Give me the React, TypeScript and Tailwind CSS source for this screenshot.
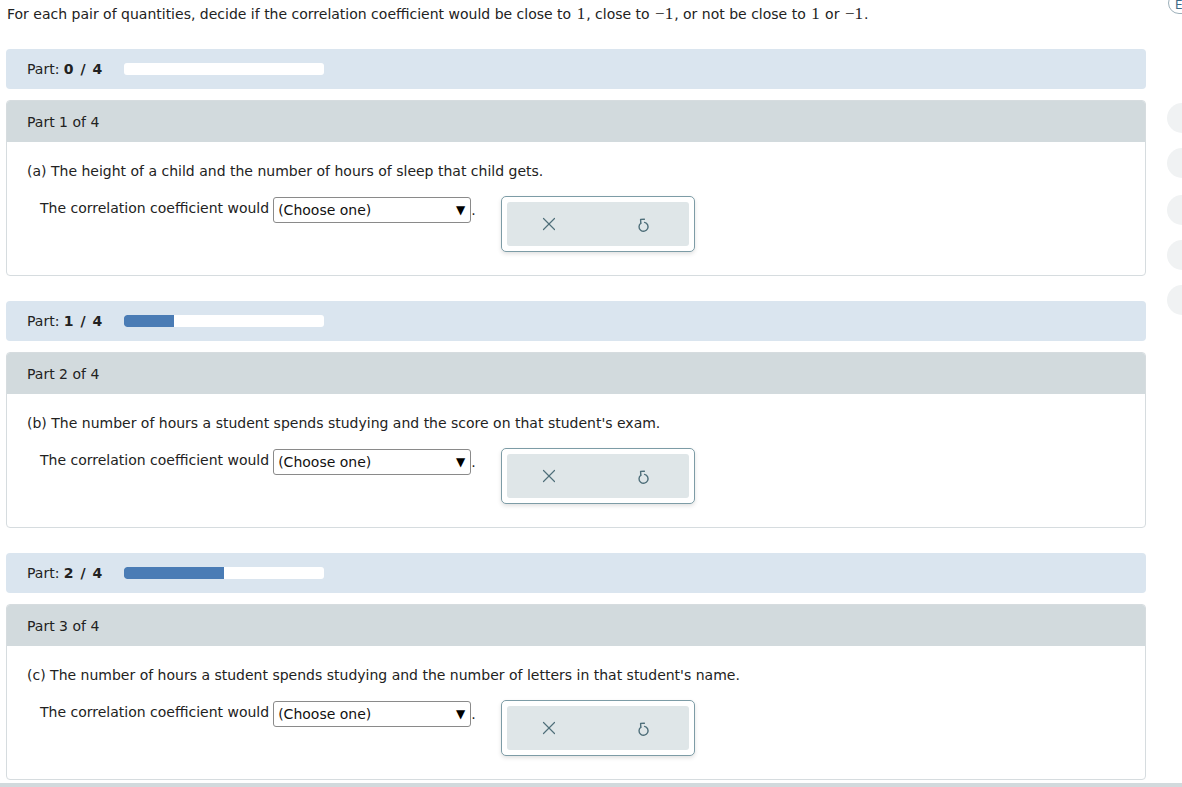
import { X } from "lucide-react";

const font = { fontFamily: '"DejaVu Sans", Verdana, sans-serif' };

function M({ children }: { children: React.ReactNode }) {
  return (
    <span className="px-[1px] text-[17px] leading-none" style={{ fontFamily: '"Liberation Serif", "DejaVu Serif", serif' }}>
      {children}
    </span>
  );
}

function ProgressBar({ done }: { done: number }) {
  return (
    <div className="flex h-10 items-center rounded bg-[#dae5ef] pl-[21px]">
      <span className="w-[97px] text-[14px] text-[#222]">
        Part: <b className="tracking-[1px]">{done} / 4</b>
      </span>
      <div className="h-3 w-[200px] overflow-hidden rounded-[3px] bg-white">
        <div className="h-full rounded-l-[3px] bg-[#4a7cb5]" style={{ width: `${done * 25}%` }} />
      </div>
    </div>
  );
}

function Undo() {
  return (
    <svg width="12" height="16" viewBox="0 0 12 16" fill="none" stroke="#4f6f7a" strokeWidth="1.4" strokeLinecap="round" strokeLinejoin="round">
      <path d="M2.8 6.2 A4.5 4.5 0 1 0 6.6 5.4" />
      <path d="M6.4 2.2 L2.6 2.4 L2.8 6.2" />
    </svg>
  );
}

function PartCard({ n, letter, text }: { n: number; letter: string; text: string }) {
  return (
    <div className="mt-[11px] overflow-hidden rounded border border-[#d6dcdf] bg-white">
      <div className="flex h-[41px] items-center bg-[#d2dadd] pl-[20px] pt-[1px] text-[14px] text-[#222]">
        Part {n} of 4
      </div>
      <div className="h-[133px] pl-[20px] pt-[19px] text-[14px] leading-[20px] text-[#222]">
        <p>
          ({letter}) {text}
        </p>
        <div className="mt-[16px] flex items-start pl-[13px]">
          <span className="mt-[1px]">The correlation coefficient would</span>
          <div className="ml-[4px] flex h-[26px] w-[198px] items-center justify-between rounded-[3px] border border-[#8a8a8a] pl-[4px] pr-[5px] text-[14px] text-[#111]">
            <span>(Choose one)</span>
            <span className="text-[12px] text-black">▼</span>
          </div>
          <span className="mt-[3px]">.</span>
          <div className="ml-[25px] -mt-[1px] rounded-[5px] border border-[#7d9ca6] bg-white p-[5px] shadow-[0_2px_4px_rgba(0,0,0,0.12)]">
            <div className="flex h-[44px] w-[182px] items-center rounded-[3px] bg-[#dfe6e8] pl-[31px]">
              <X size={22} strokeWidth={1.3} color="#4f6f7a" />
              <span className="ml-[78px] mt-[1px] flex">
                <Undo />
              </span>
            </div>
          </div>
        </div>
      </div>
    </div>
  );
}

export default function App() {
  const parts = [
    { letter: "a", text: "The height of a child and the number of hours of sleep that child gets." },
    { letter: "b", text: "The number of hours a student spends studying and the score on that student's exam." },
    { letter: "c", text: "The number of hours a student spends studying and the number of letters in that student's name." },
  ];
  return (
    <div className="relative h-[787px] w-[1182px] overflow-hidden bg-white" style={font}>
      <div className="w-[1146px] pl-[6px]">
        <p className="pl-[1px] pt-[4px] text-[14px] leading-[20px] text-[#222]">
          For each pair of quantities, decide if the correlation coefficient would be close to <M>1</M>, close to{" "}
          <M>−1</M>, or not be close to <M>1</M> or <M>−1</M>.
        </p>
        <div className="mt-[25px]">
          {parts.map((p, i) => (
            <div key={p.letter} className={i > 0 ? "mt-[25px]" : ""}>
              <ProgressBar done={i} />
              <PartCard n={i + 1} letter={p.letter} text={p.text} />
            </div>
          ))}
        </div>
      </div>

      <div className="absolute bottom-0 left-0 h-[4px] w-full bg-[#d2dadd]" />

      <div className="absolute -top-[8px] left-[1168px] flex h-[22px] w-[40px] items-end rounded-full border border-[#9db0ba] bg-white pb-[2px] pl-[6px] text-[12px] leading-none text-[#3d6a86]">
        E
      </div>
      {[118, 163, 210, 255, 300].map((y) => (
        <div
          key={y}
          className="absolute h-[30px] w-[30px] rounded-full bg-[#f0f2f3]"
          style={{ left: 1167, top: y - 15 }}
        />
      ))}
    </div>
  );
}
